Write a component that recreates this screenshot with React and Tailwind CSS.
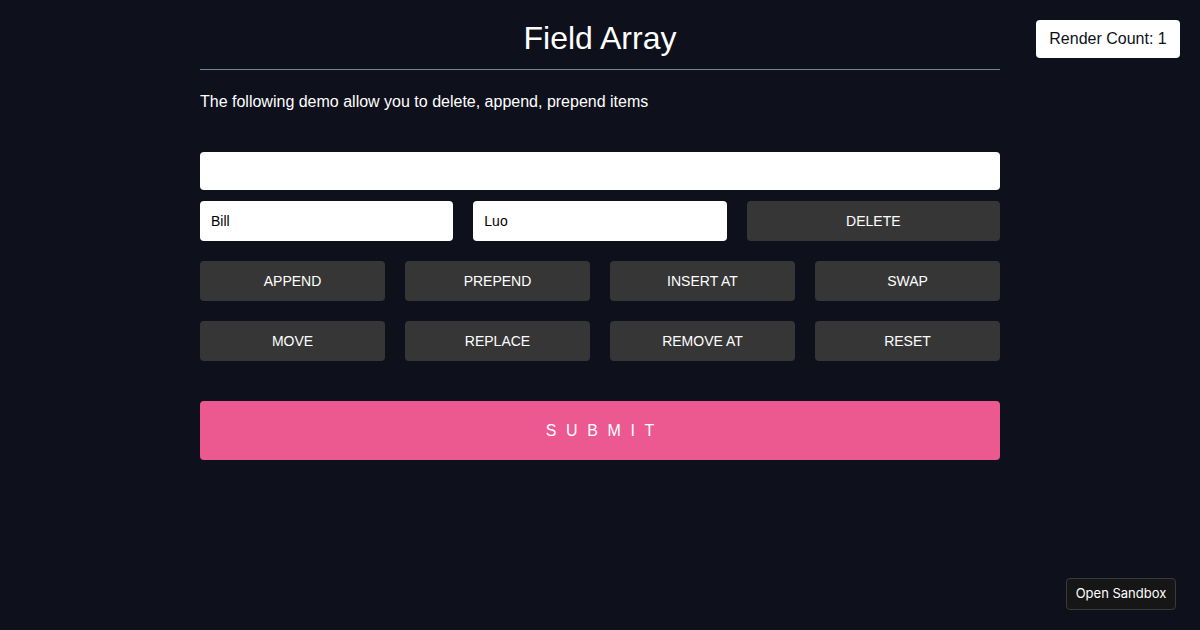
export default function App() {
  const btn = "h-10 rounded bg-[#363636] text-white text-sm flex items-center justify-center";
  return (
    <div className="relative w-[1200px] h-[630px] bg-[#0e101c] text-white" style={{ fontFamily: '"Liberation Sans", Arial, sans-serif' }}>
      <div className="absolute right-5 top-5 w-[144px] h-[38px] rounded bg-white text-[#0e101c] text-base flex items-center justify-center">Render Count: 1</div>
      <div className="w-[800px] mx-auto pt-[18px]">
        <h1 className="text-[32px] leading-[40px] text-center font-normal pb-[11px] border-b border-[#79829a]">Field Array</h1>
        <p className="mt-[22px] text-base leading-5">The following demo allow you to delete, append, prepend items</p>
        <div className="mt-[40px] h-[38px] rounded bg-white"></div>
        <div className="mt-[11px] grid grid-cols-3 gap-5">
          <div className="h-10 rounded bg-white text-black text-sm flex items-center px-[11px]">Bill</div>
          <div className="h-10 rounded bg-white text-black text-sm flex items-center px-[11px]">Luo</div>
          <div className={btn}>DELETE</div>
        </div>
        <div className="mt-5 grid grid-cols-4 gap-5">
          {["APPEND","PREPEND","INSERT AT","SWAP","MOVE","REPLACE","REMOVE AT","RESET"].map(t => <div key={t} className={btn}>{t}</div>)}
        </div>
        <div className="mt-10 h-[59px] rounded bg-[#ec5990] text-white text-base tracking-[0.6em] flex items-center justify-center pl-[0.6em]">SUBMIT</div>
      </div>
      <div className="absolute right-6 bottom-5 w-[110px] h-[32px] rounded border border-[#3a3a3a] bg-[#161616] text-[13px] text-white flex items-center justify-center" style={{ fontFamily: 'Inter, sans-serif' }}>Open Sandbox</div>
    </div>
  );
}
